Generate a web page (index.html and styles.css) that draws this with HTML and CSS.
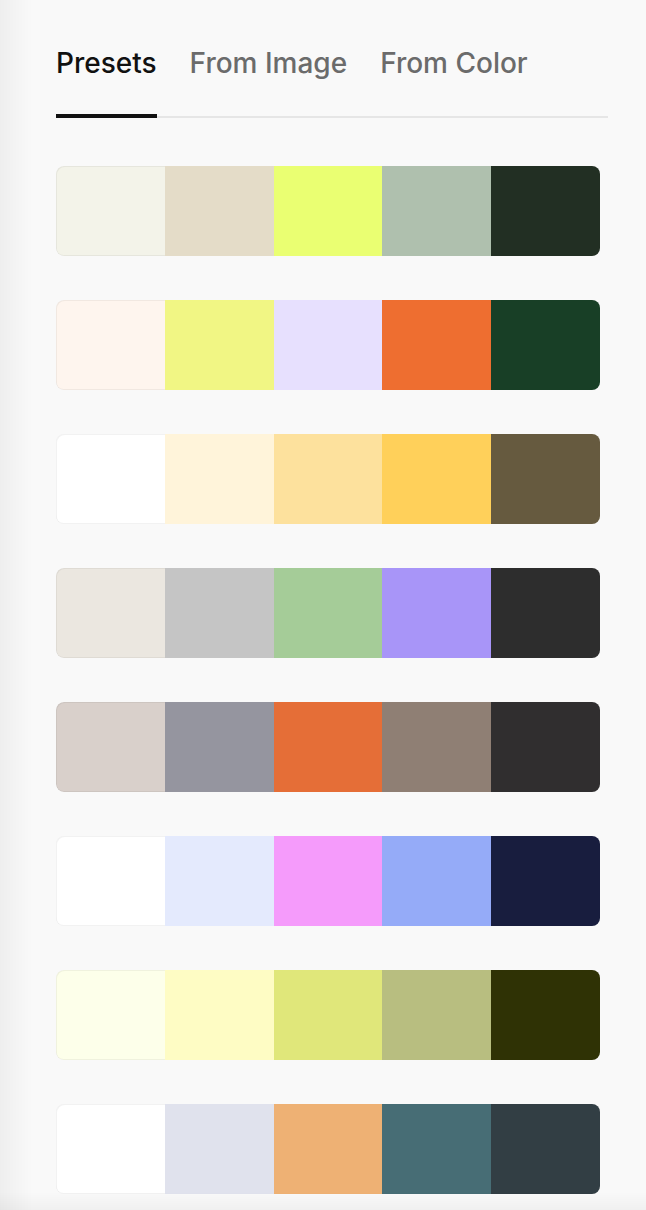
FILE: index.html
```html
<!DOCTYPE html>
<html lang="en">
<head>
<meta charset="utf-8">
<title>Palettes</title>
<link rel="stylesheet" href="styles.css">
</head>
<body>
<div class="panel">
  <nav class="tabs">
    <span class="tab active">Presets</span>
    <span class="tab">From Image</span>
    <span class="tab">From Color</span>
  </nav>
  <div class="palettes">
    <div class="palette"><i style="background:#f3f3e9"></i><i style="background:#e4dcc8"></i><i style="background:#eaff72"></i><i style="background:#afc0ae"></i><i style="background:#222f23"></i></div>
    <div class="palette"><i style="background:#fef5ee"></i><i style="background:#f1f684"></i><i style="background:#e7e0fe"></i><i style="background:#ee6e30"></i><i style="background:#183f26"></i></div>
    <div class="palette"><i style="background:#ffffff"></i><i style="background:#fff4da"></i><i style="background:#fde19d"></i><i style="background:#ffd05a"></i><i style="background:#665a3f"></i></div>
    <div class="palette"><i style="background:#ebe7e0"></i><i style="background:#c5c5c5"></i><i style="background:#a5cc98"></i><i style="background:#a895f8"></i><i style="background:#2d2d2d"></i></div>
    <div class="palette"><i style="background:#d9d0cb"></i><i style="background:#95959f"></i><i style="background:#e56e37"></i><i style="background:#8f7f74"></i><i style="background:#302e2f"></i></div>
    <div class="palette"><i style="background:#ffffff"></i><i style="background:#e4eafd"></i><i style="background:#f59bfb"></i><i style="background:#95abf8"></i><i style="background:#181d3e"></i></div>
    <div class="palette"><i style="background:#fdffea"></i><i style="background:#fefcc4"></i><i style="background:#e0e77a"></i><i style="background:#b8be80"></i><i style="background:#2f3205"></i></div>
    <div class="palette"><i style="background:#ffffff"></i><i style="background:#e0e2ed"></i><i style="background:#eeb174"></i><i style="background:#476d75"></i><i style="background:#323e44"></i></div>
  </div>
</div>
<div class="shade-left"></div>
<div class="shade-bottom"></div>
</body>
</html>
```
FILE: styles.css
```css
html, body {
  margin: 0;
  padding: 0;
  background: #f9f9f9;
  font-family: Inter, "Liberation Sans", sans-serif;
}
.panel {
  padding: 45px 0 0 56px;
  width: 552px;
}
.tabs {
  display: flex;
  gap: 33px;
  border-bottom: 2px solid #e6e6e6;
}
.tab {
  font-size: 28px;
  font-weight: 500;
  letter-spacing: 0;
  line-height: 36px;
  color: #6b6b6b;
  padding-bottom: 33px;
  margin-bottom: -2px;
  border-bottom: 4px solid transparent;
}
.tab.active {
  color: #111111;
  border-bottom-color: #111111;
}
.palettes {
  display: flex;
  flex-direction: column;
  gap: 44px;
  margin-top: 48px;
}
.palette {
  display: flex;
  width: 544px;
  height: 90px;
  border-radius: 8px;
  overflow: hidden;
  box-shadow: inset 0 0 0 1px rgba(0,0,0,0.04);
}
.palette i {
  flex: 1;
}
.palette i:first-child {
  border-radius: 8px 0 0 8px;
  box-shadow: inset 1px 1px 0 rgba(0,0,0,0.05), inset 0 -1px 0 rgba(0,0,0,0.05);
}
.shade-left {
  position: fixed;
  left: 0;
  top: 0;
  bottom: 0;
  width: 32px;
  background: linear-gradient(to right, rgba(0,0,0,0.045), rgba(0,0,0,0));
  pointer-events: none;
}
.shade-bottom {
  position: fixed;
  left: 0;
  right: 0;
  bottom: 0;
  height: 18px;
  background: linear-gradient(to top, rgba(0,0,0,0.035), rgba(0,0,0,0));
  pointer-events: none;
}
```
